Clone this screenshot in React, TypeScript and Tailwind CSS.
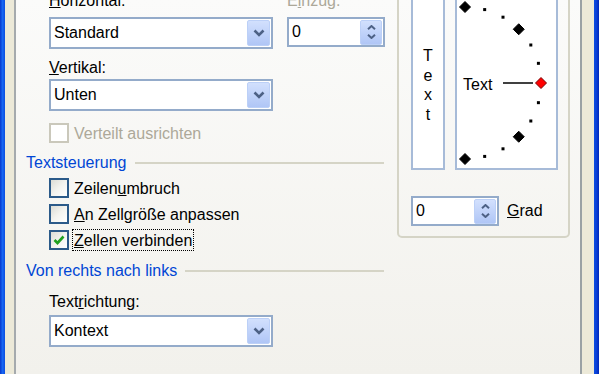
import React from "react";

function Chevron() {
  return (
    <svg width="12" height="8" viewBox="0 0 12 8">
      <path d="M1.5 1.5 L6 6 L10.5 1.5" stroke="#4d6185" strokeWidth="2.6" fill="none" strokeLinejoin="miter" />
    </svg>
  );
}

function Combo({ value }: { value: string }) {
  return (
    <div className="flex h-[32px] w-[224px] items-center border-2 border-[#94abca] bg-white pl-[3px] pr-[1px]">
      <span className="flex-1 leading-[18px]">{value}</span>
      <div className="flex h-[26px] w-[23px] items-center justify-center rounded-[2px] border border-[#bcd0f7] bg-gradient-to-b from-[#d2e0fd] to-[#b0c6f6]">
        <Chevron />
      </div>
    </div>
  );
}

function SpinBtn() {
  return (
    <div className="flex h-[25px] w-[22px] flex-col items-center justify-center gap-[4px] rounded-[2px] border border-[#bcd0f7] bg-gradient-to-b from-[#d2e0fd] to-[#b0c6f6]">
      <svg width="9" height="5" viewBox="0 0 9 5">
        <path d="M1 4.2 L4.5 1 L8 4.2" stroke="#4d6185" strokeWidth="2" fill="none" />
      </svg>
      <svg width="9" height="5" viewBox="0 0 9 5">
        <path d="M1 0.8 L4.5 4 L8 0.8" stroke="#4d6185" strokeWidth="2" fill="none" />
      </svg>
    </div>
  );
}

function Check({ checked, disabled }: { checked?: boolean; disabled?: boolean }) {
  return (
    <div
      className={
        disabled
          ? "flex h-[20px] w-[20px] shrink-0 items-center justify-center border-2 border-[#cac8bb] bg-white"
          : "flex h-[20px] w-[20px] shrink-0 items-center justify-center border-2 border-[#2b5a89] bg-gradient-to-br from-[#dcdcd5] via-[#f3f3ef] to-white"
      }
    >
      {checked && (
        <svg width="14" height="14" viewBox="0 0 14 14">
          <path d="M2.5 7 L5.5 10 L11.5 3.5" stroke="#21a121" strokeWidth="2.6" fill="none" />
        </svg>
      )}
    </div>
  );
}

function CheckRow({
  children,
  checked,
  disabled,
  focus,
  className,
}: {
  children: React.ReactNode;
  checked?: boolean;
  disabled?: boolean;
  focus?: boolean;
  className?: string;
}) {
  return (
    <div className={"flex h-[20px] items-center gap-[3px] " + (className ?? "")}>
      <Check checked={checked} disabled={disabled} />
      <span
        className={
          (focus ? "border border-dotted border-black " : "border border-transparent ") +
          (disabled ? "text-[#aca899] " : "text-black ") +
          "px-[1px] pt-[2px] leading-[18px] whitespace-nowrap"
        }
      >
        {children}
      </span>
    </div>
  );
}

function Header({ children, className }: { children: React.ReactNode; className?: string }) {
  return (
    <div className={"flex items-center " + (className ?? "")}>
      <span className="leading-[18px] text-[#0046d5] whitespace-nowrap">{children}</span>
      <div className="ml-[8px] h-[2px] flex-1 bg-[#d5d4c6]" />
    </div>
  );
}

function Dial() {
  const pts: { a: number; big: boolean; red?: boolean }[] = [];
  for (let d = 90; d >= -90; d -= 15) {
    pts.push({ a: d, big: d % 45 === 0, red: d === 0 });
  }
  const cx = 8;
  const cy = 85;
  const r = 76;
  return (
    <svg width="99" height="170" viewBox="0 0 99 170">
      {pts.map((p, i) => {
        const x = cx + r * Math.cos((p.a * Math.PI) / 180);
        const y = cy - r * Math.sin((p.a * Math.PI) / 180);
        if (p.big) {
          return (
            <polygon
              key={i}
              points={`${x},${y - 5.5} ${x + 5.5},${y} ${x},${y + 5.5} ${x - 5.5},${y}`}
              fill={p.red ? "#ff0000" : "#000"}
              stroke={p.red ? "#7a0000" : "#000"}
              strokeWidth="1"
            />
          );
        }
        return <rect key={i} x={x - 1.5} y={y - 1.5} width="3" height="3" fill="#000" />;
      })}
      <text x="6" y="91.5" fontSize="16" fontFamily="'Liberation Sans', Arial, sans-serif" fill="#000">
        Text
      </text>
      <line x1="46" y1="85" x2="76" y2="85" stroke="#000" strokeWidth="1.5" />
    </svg>
  );
}

export default function App() {
  return (
    <div className="flex h-[374px] w-[599px] overflow-hidden bg-[#ece9d8] font-['Liberation_Sans',Arial,sans-serif] text-[16px] text-black">
      {/* left window frame */}
      <div className="h-full w-[5px] bg-gradient-to-r from-[#0a36cc] via-[#1866f2] to-[#0c4ee0]" />
      <div className="h-full w-[9px] bg-[#ece9d8]" />
      {/* tab page */}
      <div className="flex h-full w-[568px] border-l-2 border-r-2 border-l-[#a5aaad] border-r-[#9aa1a4] bg-gradient-to-b from-[#fbfbfa] to-[#f2f1ec]">
        {/* left column */}
        <div className="mt-[-8px] flex w-[381px] flex-col pl-[10px] pr-[13px]">
          <div className="flex gap-[14px] pl-[23px]">
            <div className="flex flex-col">
              <span className="leading-[18px]">
                <u>H</u>orizontal:
              </span>
              <div className="mt-[7px]">
                <Combo value="Standard" />
              </div>
            </div>
            <div className="flex flex-col">
              <span className="leading-[18px] text-[#aca899]">
                E<u>i</u>nzug:
              </span>
              <div className="mt-[7px] flex h-[30px] w-[98px] items-center border-2 border-[#94abca] bg-white pl-[3px] pr-[1px]">
                <span className="flex-1 leading-[18px]">0</span>
                <SpinBtn />
              </div>
            </div>
          </div>
          <div className="flex flex-col pl-[23px]">
            <span className="mt-[10px] leading-[18px]">
              <u>V</u>ertikal:
            </span>
            <div className="mt-[2px]">
              <Combo value="Unten" />
            </div>
            <CheckRow disabled className="mt-[12px]">
              Verteilt ausrichten
            </CheckRow>
          </div>
          <Header className="mt-[11px]">Textsteuerung</Header>
          <div className="flex flex-col pl-[23px]">
            <CheckRow className="mt-[6px]">
              Zeilen<u>u</u>mbruch
            </CheckRow>
            <CheckRow className="mt-[6px]">
              <u>A</u>n Zellgröße anpassen
            </CheckRow>
            <CheckRow checked focus className="mt-[6px]">
              <u>Z</u>ellen verbinden
            </CheckRow>
          </div>
          <Header className="mt-[12px]">Von rechts nach links</Header>
          <div className="flex flex-col pl-[23px]">
            <span className="mt-[13px] leading-[18px]">
              Text<u>r</u>ichtung:
            </span>
            <div className="mt-[4px]">
              <Combo value="Kontext" />
            </div>
          </div>
        </div>
        {/* orientation group */}
        <div className="mt-[-30px] flex h-[268px] w-[173px] flex-col rounded-[5px] border-2 border-[#d5d4c6] pl-[12px] pr-[10px] pt-[24px]">
          <div className="flex gap-[10px]">
            <div className="flex h-[174px] w-[34px] flex-col items-center border-2 border-[#a7bbd8] bg-white pt-[48px] leading-[19.5px]">
              <span>T</span>
              <span>e</span>
              <span>x</span>
              <span>t</span>
            </div>
            <div className="h-[174px] w-[103px] border-2 border-[#a7bbd8] bg-white">
              <Dial />
            </div>
          </div>
          <div className="mt-[26px] flex items-center gap-[8px]">
            <div className="flex h-[30px] w-[88px] items-center border-2 border-[#94abca] bg-white pl-[3px] pr-[1px]">
              <span className="flex-1 leading-[18px]">0</span>
              <SpinBtn />
            </div>
            <span className="leading-[18px]">
              <u>G</u>rad
            </span>
          </div>
        </div>
      </div>
      {/* right frame */}
      <div className="h-full w-[12px] bg-[#ece9d8]" />
      <div className="h-full w-[5px] bg-gradient-to-r from-[#0c4ee0] via-[#0a3fd6] to-[#0026b8]" />
    </div>
  );
}
